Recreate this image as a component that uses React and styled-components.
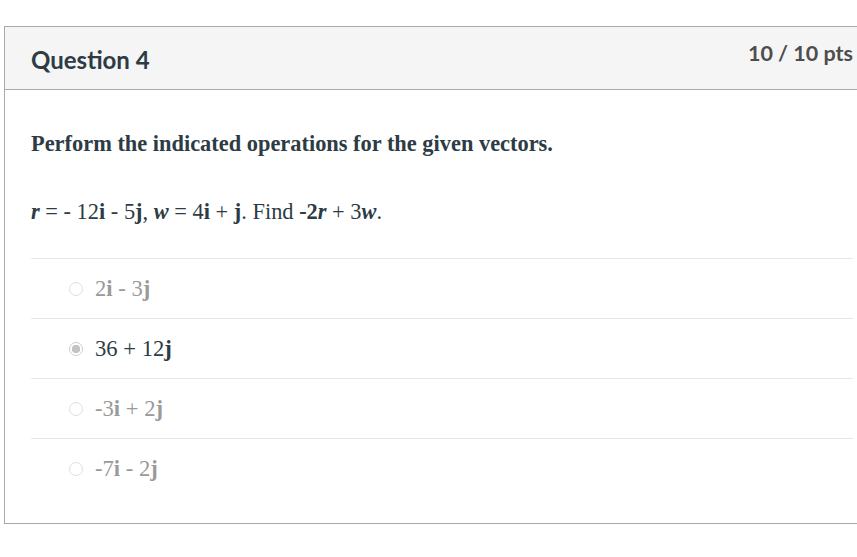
import React from 'react';
import styled, { createGlobalStyle } from 'styled-components';

const GlobalStyle = createGlobalStyle`
  html, body {
    margin: 0;
    padding: 0;
    background: #ffffff;
  }
`;

const Page = styled.div`
  padding: 26px 0 0 4px;
`;

// the right edge of the card is cut off in the screenshot, so no right border
const Panel = styled.div`
  border: 1px solid #a9a9a9;
  border-right: none;
  background: #ffffff;
`;

const Header = styled.div`
  display: flex;
  justify-content: space-between;
  align-items: flex-start;
  height: 62px;
  background: #f5f5f5;
  border-bottom: 1px solid #a9a9a9;
  padding: 0 4px 0 26px;
  font-family: Lato, "Liberation Sans", sans-serif;
`;

const Title = styled.h2`
  margin: 0;
  padding-top: 18px;
  font-size: 24px;
  line-height: 30px;
  font-weight: 700;
  color: #2d3b45;
`;

const Points = styled.div`
  padding-top: 13px;
  font-size: 21.5px;
  line-height: 26px;
  font-weight: 700;
  color: #4d4d4d;
`;

const Body = styled.div`
  padding: 40px 4px 25px 26px;
  font-family: "Liberation Serif", "Times New Roman", serif;
  color: #2d3b45;
`;

const Prompt = styled.p`
  margin: 0;
  font-size: 22.4px;
  line-height: 28px;
  font-weight: 700;
`;

const Equation = styled.p`
  margin: 40px 0 0;
  font-size: 22.4px;
  line-height: 28px;
`;

const Answers = styled.div`
  margin-top: 32px;
`;

const Row = styled.label`
  display: flex;
  align-items: center;
  height: 59px;
  border-top: 1px solid #e8e8e8;
  padding-left: 38px;
  gap: 12px;
  font-size: 22.6px;
  color: ${p => (p.$selected ? '#2d3b45' : '#9a9a9a')};
`;

const Radio = styled.span`
  box-sizing: border-box;
  width: 14px;
  height: 14px;
  border-radius: 50%;
  border: 1px solid ${p => (p.$checked ? '#cfcfcf' : '#e0e0e0')};
  background: ${p => (p.$checked ? 'radial-gradient(circle, #c4c4c4 0 4px, #ffffff 4.5px)' : '#ffffff')};
  flex-shrink: 0;
`;

const answers = [
  { key: 'a', parts: ['2', <b key="i">i</b>, ' - 3', <b key="j">j</b>] },
  { key: 'b', parts: ['36 + 12', <b key="j">j</b>], selected: true },
  { key: 'c', parts: ['-3', <b key="i">i</b>, ' + 2', <b key="j">j</b>] },
  { key: 'd', parts: ['-7', <b key="i">i</b>, ' - 2', <b key="j">j</b>] },
];

const App = () => (
  <Page>
    <GlobalStyle />
    <Panel>
      <Header>
        <Title>Question 4</Title>
        <Points>10 / 10 pts</Points>
      </Header>
      <Body>
        <Prompt>Perform the indicated operations for the given vectors.</Prompt>
        <Equation>
          <b><i>r</i></b> = - 12<b>i</b> - 5<b>j</b>, <b><i>w</i></b> = 4<b>i</b> + <b>j</b>. Find <b>-2<i>r</i></b> + 3<b><i>w</i></b>.
        </Equation>
        <Answers>
          {answers.map(a => (
            <Row key={a.key} $selected={a.selected}>
              <Radio $checked={a.selected} />
              <span>{a.parts}</span>
            </Row>
          ))}
        </Answers>
      </Body>
    </Panel>
  </Page>
);

export default App;
